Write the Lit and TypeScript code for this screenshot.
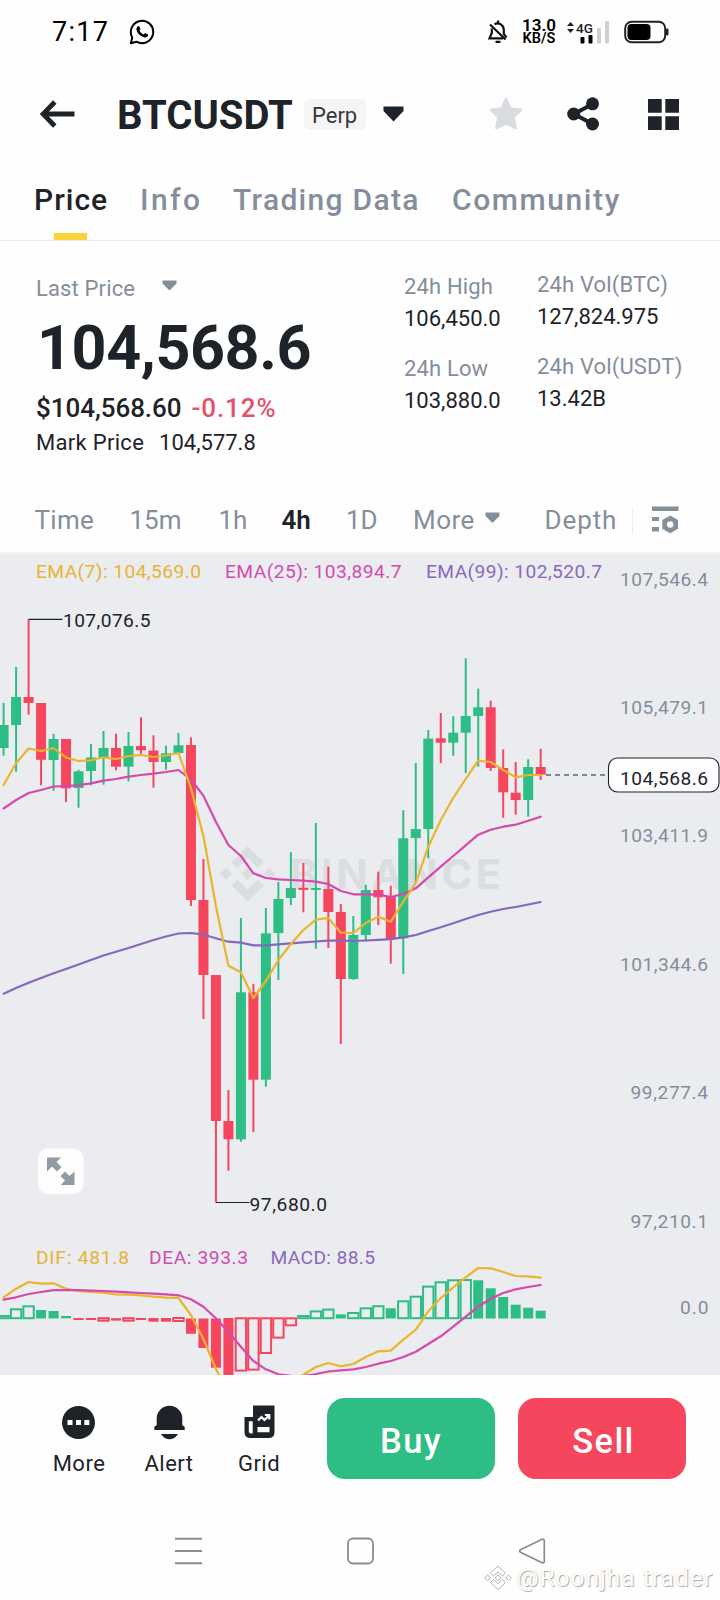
import { LitElement, html, svg, css } from "lit";
import { customElement } from "lit/decorators.js";

const GREEN = "#2ebd85";
const RED = "#f6465d";

const FIRST_X = 3.6;
const STEP = 12.49;
const cx = (i: number) => FIRST_X + STEP * i;

// [direction, high, body top, body bottom, low] in chart coordinates
type Candle = [number, number, number, number, number];
const CANDLES: Candle[] = [
  [1, 703, 725, 748, 755.7], [1, 667, 697, 725, 771.7], [0, 619.3, 697, 703, 714.7],
  [0, 703, 703, 759.8, 785.3], [1, 733.7, 739, 760, 790.7], [0, 739, 739, 788.3, 802],
  [1, 769.7, 771.3, 788, 807.7], [1, 744, 757.5, 771, 785.3], [1, 731, 748, 757.3, 784.7],
  [0, 733.7, 748, 766.7, 770.3], [1, 732, 746, 766.7, 781.3], [0, 717.3, 746, 750.3, 753.7],
  [0, 735.3, 750.5, 762, 787.7], [1, 745.7, 753.3, 762, 769.7], [1, 733, 745.3, 753, 753],
  [0, 737.3, 745, 900, 906], [0, 859, 900, 975, 1019], [0, 975, 975, 1121, 1202.5],
  [0, 1090, 1121, 1139.3, 1170.7], [1, 918, 992.3, 1139.3, 1141.7], [0, 984, 992.3, 1079.7, 1132],
  [1, 908, 933.3, 1079.7, 1086.7], [1, 882, 899, 933, 980], [1, 852.3, 888, 898, 905],
  [0, 863, 887.9, 889.9, 912.3], [1, 823, 888, 889.9, 948.7], [0, 866.7, 889, 912, 948],
  [0, 904, 912, 979, 1044], [1, 916, 935, 979, 979.7], [1, 884.7, 890, 935, 940],
  [0, 871.7, 890, 897.3, 925], [0, 885.7, 897, 939, 963.7], [1, 810.3, 838.3, 938.3, 974],
  [1, 763, 829, 838, 883], [1, 730, 738.7, 829, 858.3], [0, 713, 738.3, 742.7, 763],
  [1, 716.3, 732.7, 742.7, 755.7], [1, 658.3, 716, 732.7, 773], [1, 688.7, 707.3, 716, 766.7],
  [0, 700.7, 707.3, 768, 771], [0, 749.3, 768, 792.3, 817.7], [0, 762, 792.7, 800, 814.7],
  [1, 759.3, 767, 800, 816.7], [0, 748.7, 767, 774.7, 780],
];

const EMA7 = [785, 763, 748.5, 751, 748, 757.5, 761, 760.3, 757.3, 759, 756, 755, 757, 755.5, 753, 788, 836, 906,
  965.7, 972.3, 998, 981, 960, 944, 930, 919.7, 918, 932.7, 933, 923, 916.7, 921.7, 901.7, 883, 846.7, 820, 798,
  779, 760.7, 762, 770, 777.3, 775, 775];
const EMA25 = [808.5, 800, 793, 790, 786.5, 786.2, 785.2, 783.3, 780.7, 779, 776.7, 775, 773.7, 772, 770, 779.5,
  795.7, 821.7, 845, 856, 873.3, 878, 879.3, 880, 880.7, 881.7, 884, 891, 894.3, 894.3, 894.7, 897, 894, 888.3,
  877.3, 866.7, 856, 845.3, 834.7, 829.7, 826.7, 824.7, 820.7, 816.7];
const EMA99 = [993.7, 988, 982.7, 978, 973.3, 969, 964.5, 960, 955.5, 951.7, 948, 944, 940, 936.5, 933.5, 933,
  934.7, 938.3, 941.7, 942.7, 945.3, 945.3, 944.3, 943.3, 942.4, 941.5, 940.7, 940.7, 941, 940.5, 939.8, 939.2,
  937.3, 935, 931, 927.2, 923.3, 919, 915, 911.8, 909, 907, 904.5, 902];
const DIF = [1297.3, 1288.7, 1282, 1283.7, 1283.3, 1288.7, 1291, 1292, 1292.7, 1294.5, 1294.7, 1295.3, 1296.7,
  1297.7, 1298, 1315, 1339, 1369, 1392, 1396, 1398, 1395, 1390, 1382, 1374.7, 1367, 1363, 1366.3, 1364, 1357,
  1351.3, 1350.7, 1339.7, 1329.7, 1311.3, 1298, 1287.3, 1277.3, 1268, 1268.3, 1272, 1276, 1276.3, 1277.7];
const DEA = [1299.7, 1297.3, 1294, 1292, 1290.2, 1290, 1290.2, 1290.7, 1291, 1291.7, 1292.3, 1293, 1293.7, 1294.3,
  1295.3, 1299.3, 1306.7, 1318.3, 1332, 1346.7, 1361, 1369.3, 1374.3, 1375.8, 1376, 1374, 1371.5, 1370.3, 1369.3,
  1367, 1363.7, 1361, 1357, 1351.7, 1344, 1336.3, 1326.7, 1316.7, 1306.7, 1298.7, 1293, 1289.3, 1287, 1285];

// [direction, hollow, top, bottom]
type Bar = [number, number, number, number];
const BARS: Bar[] = [
  [1, 1, 1315, 1319.2], [1, 1, 1308.3, 1319.2], [1, 1, 1305.3, 1319.2], [1, 0, 1310, 1318.5],
  [1, 0, 1311, 1318.5], [1, 0, 1316, 1318.3], [0, 0, 1318, 1320], [0, 0, 1318, 1320],
  [0, 1, 1317.2, 1321.7], [0, 0, 1318.2, 1320.6], [0, 1, 1317.2, 1321.7], [0, 0, 1318, 1320],
  [0, 0, 1318, 1321.7], [0, 0, 1318, 1321.7], [0, 1, 1317, 1322], [0, 0, 1318.5, 1333.8],
  [0, 0, 1318.5, 1348], [0, 0, 1318.5, 1367.7], [0, 0, 1318, 1376], [0, 1, 1317.3, 1371.6],
  [0, 1, 1317.3, 1370.6], [0, 1, 1317.3, 1354], [0, 1, 1317.3, 1338.6], [0, 1, 1317.3, 1326.3],
  [1, 1, 1315, 1319.2], [1, 1, 1310.4, 1319.2], [1, 1, 1308.6, 1319.2], [1, 0, 1314.3, 1318.5],
  [1, 1, 1312, 1319.2], [1, 1, 1307.3, 1319.2], [1, 1, 1305.2, 1319.2], [1, 0, 1308.3, 1318.5],
  [1, 1, 1300.3, 1319.2], [1, 1, 1295.7, 1319.2], [1, 1, 1285.6, 1319.2], [1, 1, 1281.3, 1319.2],
  [1, 1, 1279.3, 1319.2], [1, 1, 1279, 1319.2], [1, 0, 1280.3, 1318.5], [1, 0, 1288.3, 1318.5],
  [1, 0, 1297, 1318.5], [1, 0, 1304.7, 1318.5], [1, 0, 1307.7, 1318.5], [1, 0, 1310.7, 1318.5],
];

const AXIS: [string, number][] = [
  ["107,546.4", 585.7], ["105,479.1", 714], ["103,411.9", 842.3],
  ["101,344.6", 970.8], ["99,277.4", 1099], ["97,210.1", 1227.6],
];

const points = (ys: number[]) => ys.map((y, i) => `${cx(i).toFixed(1)},${y}`).join(" ");

@customElement("price-chart")
export class PriceChart extends LitElement {
  static styles = css`
    :host { display: block; }
    svg { display: block; width: 720px; height: 823px; background: #eaecef; }
    text { font-family: Roboto, "Liberation Sans", sans-serif; font-size: 19.2px; }
    .line { fill: none; stroke-width: 2.2; stroke-linejoin: round; stroke-linecap: round; }
    .y { stroke: #ebb42c; }
    .p { stroke: #d549ac; }
    .v { stroke: #8667c0; }
    .ty { fill: #e7b335; }
    .tp { fill: #d34bae; }
    .tv { fill: #8a68c0; }
    .axis { fill: #848e9c; }
    .ink { fill: #1e2329; }
    .brand { font-family: Inter, Roboto, sans-serif; font-size: 41.5px; font-weight: 700; fill: #dadde1; }
    .mark { fill: #dadde1; }
  `;

  render() {
    return html`<svg viewBox="0 552 720 823">
      <rect x="0" y="552" width="720" height="1.5" fill="#f0f1f3"></rect>
      <g class="mark">
        <path d="M247.7 846 L264 862 L258 868 L247.7 858 L237.5 868 L231.5 862 Z"></path>
        <path d="M247.7 901.5 L264 885.500 L258 879.500 L247.7 889.500 L237.5 879.500 L231.5 885.500 Z"></path>
        <path d="M247.7 867.5 L254 873.700 L247.7 880 L241.500 873.700 Z"></path>
        <path d="M226 867.700 L232 873.700 L226 879.700 L220 873.700 Z"></path>
        <path d="M269.500 867.700 L275.500 873.700 L269.500 879.700 L263.500 873.700 Z"></path>
      </g>
      <text class="brand" x="290" y="888.500" textLength="211">BINANCE</text>

      ${BARS.map(([up, hollow, t, b], i) => {
        const c = up ? GREEN : RED;
        return hollow
          ? svg`<rect x=${cx(i) - 5.2} y=${t + 1} width="10.4" height=${b - t - 2} fill="none" stroke=${c} stroke-width="2"></rect>`
          : svg`<rect x=${cx(i) - 5} y=${t} width="10" height=${b - t} fill=${c}></rect>`;
      })}

      ${CANDLES.map(([up, h, t, b, l], i) => {
        const c = up ? GREEN : RED;
        return svg`<rect x=${cx(i) - 1} y=${h} width="2" height=${l - h} fill=${c}></rect>
          <rect x=${cx(i) - 5} y=${t} width="10" height=${b - t} fill=${c}></rect>`;
      })}

      <polyline class="line v" points=${points(EMA99)}></polyline>
      <polyline class="line p" points=${points(EMA25)}></polyline>
      <polyline class="line y" points=${points(EMA7)}></polyline>
      <polyline class="line y" points=${points(DIF)}></polyline>
      <polyline class="line p" points=${points(DEA)}></polyline>

      <path d="M28.600 619.300 H62.500 M216 1202.500 H249.500" stroke="#1e2329" stroke-width="1.2"></path>
      <text class="ink" x="63" y="626.700" textLength="87.500">107,076.5</text>
      <text class="ink" x="249.500" y="1210.700" textLength="77.500">97,680.0</text>

      <text class="ty" x="36" y="577.500" textLength="165">EMA(7): 104,569.0</text>
      <text class="tp" x="225" y="577.500" textLength="176.500">EMA(25): 103,894.7</text>
      <text class="tv" x="426" y="577.500" textLength="176">EMA(99): 102,520.7</text>
      <text class="ty" x="36" y="1263.500" textLength="93">DIF: 481.8</text>
      <text class="tp" x="149" y="1263.500" textLength="99">DEA: 393.3</text>
      <text class="tv" x="270.500" y="1263.500" textLength="104.500">MACD: 88.5</text>

      ${AXIS.map(([label, y]) => {
        const w = label.length > 8 ? 88 : 77.5;
        return svg`<text class="axis" x=${708 - w} y=${y} textLength=${w}>${label}</text>`;
      })}
      <text class="axis" x="680" y="1313.500" textLength="28.500">0.0</text>

      <path d="M546 775 H608" stroke="#5f6673" stroke-width="1.300" stroke-dasharray="5 4"></path>
      <rect x="608.500" y="758" width="110.500" height="34" rx="9" fill="#fdfdfd" stroke="#1e2329" stroke-width="1.100"></rect>
      <text class="ink" x="620" y="785" textLength="88">104,568.6</text>

      <rect x="38" y="1148.500" width="45.500" height="45.500" rx="10" fill="#fdfdfd"></rect>
      <path fill="#929aa5" d="M47 1157.500 H61 L56.500 1162 L61.500 1167 L57 1171.500 L52 1166.500 L47 1171.500 Z
        M74.500 1185 H60.500 L65 1180.500 L60.500 1176 L65 1171.500 L69.500 1176 L74.500 1171.500 Z"></path>
    </svg>`;
  }
}

@customElement("app-root")
export class AppRoot extends LitElement {
  static styles = css`
    :host {
      display: block;
      position: relative;
      width: 720px;
      height: 1600px;
      background: #fefefe;
      color: #1e2329;
      font-family: Roboto, "Liberation Sans", sans-serif;
      overflow: hidden;
      white-space: nowrap;
    }
    svg { display: block; flex: none; }

    .status { display: flex; align-items: center; height: 64px; padding: 0 51px 0 52px; color: #000; }
    .clock { font-size: 27px; letter-spacing: 1.3px; width: 77px; }
    .status-right { margin-left: auto; display: flex; align-items: center; }
    .rate { width: 34px; margin: 0 11px 0 14px; text-align: center; font-size: 14.5px; line-height: 14px; font-weight: 600; }
    .rate::first-line { font-size: 17px; }
    .net { font: 500 13.500px/14px Roboto, sans-serif; }
    .battery { margin-left: 14px; }

    .header { display: flex; align-items: center; height: 100px; padding: 0 41px 0 40px; }
    .back { margin-right: 42px; }
    .title { font-size: 40px; font-weight: 700; line-height: 44px; padding-top: 4px; width: 180px; }
    .perp { font-size: 22px; line-height: 28px; padding: 3px 8px 0; width: 46px; background: #f5f5f6; border-radius: 5px; margin: 0 17px 0 7px; color: #33383f; }
    .header-icons { margin-left: auto; display: flex; align-items: center; }
    .star { margin-right: 44px; }
    .share { margin-right: 48px; }

    .tabs {
      display: grid;
      grid-template-columns: 106px 93px 219px 1fr;
      height: 76px;
      padding-left: 34px;
      border-bottom: 1px solid #eaecef;
      color: #848e9c;
      font-size: 30px;
      font-weight: 500;
      line-height: 72px;
    }
    .tab { letter-spacing: 1.3px; }
    .info { letter-spacing: 2.4px; }
    .community { letter-spacing: 1.6px; }
    .active { color: #1e2329; letter-spacing: 1px; display: grid; grid-template-rows: 69px 7px; }
    .underline { width: 33px; height: 7px; margin-left: 19.500px; background: #f8d33a; }

    .stats { display: grid; grid-template-columns: 368px 133px 1fr; height: 247px; padding-left: 36px; font-size: 22px; }
    .last { padding-top: 32px; }
    .label { color: #848e9c; letter-spacing: 0.15px; }
    .row { display: flex; align-items: center; }
    .last-label { height: 30px; gap: 27px; color: #848e9c; letter-spacing: 0.15px; }
    .caret-up { margin-top: -5px; }
    .price { font-size: 61px; font-weight: 700; line-height: 90px; letter-spacing: -0.4px; padding-left: 1px; }
    .usd { font-size: 26px; font-weight: 500; line-height: 30px; gap: 10px; letter-spacing: -0.05px; }
    .change { color: #e2526a; letter-spacing: 0.9px; }
    .mark { line-height: 39px; gap: 15px; letter-spacing: 0.3px; }
    .mark-value { letter-spacing: 0; }
    .pair { line-height: 32px; padding-top: 30px; }
    .pair.early { padding-top: 28px; }
    .next { margin-top: 18px; }

    .frames {
      display: grid;
      grid-template-columns: 95px 89px 63px 64.500px 67px 131.500px 87.500px 20px 1fr;
      align-items: center;
      height: 64px;
      padding-left: 34.500px;
      font-size: 26px;
      color: #848e9c;
    }
    .frame-time { letter-spacing: 0.3px; }
    .frame-on { color: #1e2329; font-weight: 600; }
    .more { gap: 10px; letter-spacing: 0.5px; }
    .depth { letter-spacing: 0.9px; }
    .divider { width: 1px; height: 27px; background: #eaecef; }

    .bottom { display: flex; height: 125px; padding: 0 34px 0 34px; }
    .action { display: flex; flex-direction: column; align-items: center; width: 90px; padding-top: 30px; font-size: 22px; }
    .action-label { line-height: 28px; margin-top: 10px; letter-spacing: 0.5px; }
    .action svg { height: 35px; }
    .cta { width: 168px; height: 81px; margin-top: 23px; border-radius: 18px; color: #fff; font-size: 34.500px; font-weight: 500; line-height: 87px; text-align: center; letter-spacing: 1.4px; }
    .buy { background: #2ebd85; margin-left: 23px; }
    .sell { background: #f6465d; margin-left: 23px; text-indent: 3px; }

    .nav { display: flex; align-items: center; height: 101px; padding-left: 174px; }
    .nav svg + svg { margin-left: 143px; }

    .credit { position: absolute; right: 7px; bottom: 5px; display: flex; align-items: center; gap: 4px; color: #fff; font-size: 24.500px; line-height: 34px; letter-spacing: 1px; text-shadow: 1px 1px 1px #a8a8a8, -0.500px -0.500px 0.500px #dcdcdc; }
  `;

  render() {
    return html`
      <div class="status">
        <span class="clock">7:17</span>
        <svg width="26" height="26" viewBox="0 0 26 26" fill="none">
          <path d="M1.800 24.200 L3.300 18.500 A11.200 11.200 0 1 1 7.500 22.700 Z" stroke="#000" stroke-width="2" stroke-linejoin="round"></path>
          <path fill="#000" d="M8.800 7.200c.6-.5 1.200-.4 1.500.2l1 2.200c.2.500 0 1-.9 1.900 1 1.900 2.300 3.100 4.200 4 .9-1.100 1.400-1.500 1.900-1.300l2.200 1.100c.6.300.6.800.3 1.500-.7 1.400-2.400 2-4.200 1.500-3.700-1-6.500-3.900-7.300-7.200-.3-1.600.3-3 1.300-3.900Z"></path>
        </svg>
        <div class="status-right">
          <svg width="20" height="24" viewBox="0 0 20 24" fill="none" stroke="#111" stroke-width="2.200">
            <path d="M3.800 8.500 V13 L1.500 18.300 H15 M6.500 4.300 C11 1.800 15.800 5 15.800 10 V14 L18.500 17.500"></path>
            <path d="M2 4.500 L17.500 19.500 M10 0.500 V3 M7.500 21.800 H12.500"></path>
          </svg>
          <div class="rate">13.0<br>KB/S</div>
          <svg width="43" height="25" viewBox="0 0 43 25">
            <path d="M0 6 L3.500 2 L7 6 Z M0 9 L3.500 13 L7 9 Z" fill="#222"></path>
            <text class="net" x="9" y="13" textLength="17" fill="#222">4G</text>
            <rect x="13.500" y="17" width="4" height="6.500" rx="1" fill="#000"></rect>
            <rect x="21.500" y="15" width="4" height="8.500" rx="1" fill="#000"></rect>
            <rect x="30" y="8" width="4" height="15.500" rx="1" fill="#cfcfcf"></rect>
            <rect x="38" y="1" width="4" height="22.500" rx="1" fill="#cfcfcf"></rect>
          </svg>
          <svg class="battery" width="45" height="24" viewBox="0 0 45 24">
            <rect x="1.200" y="1.700" width="40" height="20.600" rx="6.500" fill="none" stroke="#222" stroke-width="2"></rect>
            <rect x="3.500" y="4" width="23" height="16" rx="4" fill="#000"></rect>
            <rect x="42" y="8.500" width="2.500" height="7" rx="1" fill="#222"></rect>
          </svg>
        </div>
      </div>

      <div class="header">
        <svg class="back" width="35" height="28" viewBox="0 0 35 28" fill="none" stroke="#1e2329" stroke-width="4.800">
          <path d="M3.500 14 H34.500 M14.800 2 L3 14 L14.800 26"></path>
        </svg>
        <div class="title">BTCUSDT</div>
        <div class="perp">Perp</div>
        <svg width="21" height="16" viewBox="0 0 21 16"><path d="M0.500 0.500 H20.500 V5 L10.500 15.500 L0.500 5 Z" fill="#1e2329"></path></svg>
        <div class="header-icons">
          <svg class="star" width="34" height="34" viewBox="0 0 34 34">
            <path d="M17 2 L21.300 11.600 L32 12.800 L24.500 20 L26.700 31 L17 26.500 L7.300 31 L9.500 20 L2 12.800 L12.700 11.600 Z" fill="#d9dce1" stroke="#d9dce1" stroke-width="2.500" stroke-linejoin="round"></path>
          </svg>
          <svg class="share" width="33" height="34" viewBox="0 0 33 34">
            <path d="M25.500 7 L7 17 L25.500 27" fill="none" stroke="#1e2329" stroke-width="4"></path>
            <circle cx="25.500" cy="6.800" r="6.500" fill="#1e2329"></circle>
            <circle cx="6.700" cy="17" r="6.500" fill="#1e2329"></circle>
            <circle cx="25.500" cy="27" r="6.500" fill="#1e2329"></circle>
          </svg>
          <svg width="31" height="31" viewBox="0 0 31 31" fill="#1e2329">
            <path d="M0 0h13.700v13.700H0Z M17.300 0H31v13.700H17.300Z M0 17.300h13.700V31H0Z M17.300 17.300H31V31H17.300Z"></path>
          </svg>
        </div>
      </div>

      <div class="tabs">
        <div class="active">Price<div class="underline"></div></div>
        <div class="tab info">Info</div>
        <div class="tab">Trading Data</div>
        <div class="tab community">Community</div>
      </div>

      <div class="stats">
        <div class="last">
          <div class="row last-label">
            <span>Last Price</span>
            <svg class="caret-up" width="15" height="11" viewBox="0 0 15 11"><path d="M0.500 0.500 H14.500 V3.500 L7.500 10.500 L0.500 3.500 Z" fill="#848e9c"></path></svg>
          </div>
          <div class="price">104,568.6</div>
          <div class="row usd"><span>$104,568.60</span><span class="change">-0.12%</span></div>
          <div class="row mark"><span>Mark Price</span><span class="mark-value">104,577.8</span></div>
        </div>
        <div class="pair">
          <div class="label">24h High</div><div>106,450.0</div>
          <div class="label next">24h Low</div><div>103,880.0</div>
        </div>
        <div class="pair early">
          <div class="label">24h Vol(BTC)</div><div>127,824.975</div>
          <div class="label next">24h Vol(USDT)</div><div>13.42B</div>
        </div>
      </div>

      <div class="frames">
        <span class="frame-time">Time</span><span>15m</span><span>1h</span><span class="frame-on">4h</span><span>1D</span>
        <span class="row more">More
          <svg class="caret-up" width="15" height="12" viewBox="0 0 15 12"><path d="M0.500 0.500 H14.500 V4 L7.500 11 L0.500 4 Z" fill="#848e9c"></path></svg>
        </span>
        <span class="depth">Depth</span>
        <span class="divider"></span>
        <svg width="28" height="28" viewBox="0 0 28 28" fill="#848e9c">
          <path d="M0 0.500H26.500V5H0Z M0 11H7V15H0Z M0 21H7V25.500H0Z"></path>
          <path fill-rule="evenodd" d="M18.200 9.500 L26 14 V22.800 L18.200 27.300 L10.300 22.800 V14 Z M18.200 15.300 A3.200 3.200 0 1 0 18.200 21.700 A3.200 3.200 0 1 0 18.200 15.300 Z"></path>
        </svg>
      </div>

      <price-chart></price-chart>

      <div class="bottom">
        <div class="action">
          <svg width="34" height="35" viewBox="0 0 34 35"><circle cx="16.500" cy="17.500" r="16.500" fill="#1e2329"></circle>
            <path d="M5.500 15h5v5h-5Z M14 15h5v5h-5Z M22.300 15h5v5h-5Z" fill="#fff"></path></svg>
          <span class="action-label">More</span>
        </div>
        <div class="action">
          <svg width="31" height="35" viewBox="0 0 31 35" fill="#1e2329">
            <path d="M2.700 13.500 A12.800 12.800 0 0 1 28.300 13.500 V20 L30.700 22 V25 H0.300 V22 L2.700 20 Z M7 29 H24 C22 32.500 18.500 34.300 15.500 34.300 S9 32.500 7 29 Z"></path></svg>
          <span class="action-label">Alert</span>
        </div>
        <div class="action">
          <svg width="31" height="35" viewBox="0 0 31 35">
            <path d="M9 0.500 H30.500 V27 Q30.500 33 24.500 33 H6.500 Q0.500 33 0.500 27 V12 H9 Z" fill="#1e2329"></path>
            <path d="M4.800 16.300 H8.700 V28.500 H6.800 Q4.800 28.500 4.800 26.500 Z M13.500 22 H25.500 V27.300 H13.500 Z" fill="#fff"></path>
            <path d="M14 15.500 L17.500 12 L20.500 15 L25 10.500 M20.800 10 H25.300 V14.500" fill="none" stroke="#fff" stroke-width="2.200"></path>
          </svg>
          <span class="action-label">Grid</span>
        </div>
        <div class="cta buy">Buy</div>
        <div class="cta sell">Sell</div>
      </div>

      <div class="nav">
        <svg width="29" height="28" viewBox="0 0 29 28"><path d="M1 1.700H28M1 14H28M1 26.300H28" stroke="#8c8c8c" stroke-width="2"></path></svg>
        <svg width="29" height="28" viewBox="0 0 29 28"><rect x="2" y="1.500" width="25" height="25" rx="5" fill="none" stroke="#8c8c8c" stroke-width="1.800"></rect></svg>
        <svg width="29" height="28" viewBox="0 0 29 28"><path d="M2.500 12.800 L24 2.200 Q26.300 1.500 26.300 4 V24 Q26.300 26.500 24 25.800 L2.500 15.200 Q0.800 14 2.500 12.800 Z" fill="none" stroke="#8c8c8c" stroke-width="1.700"></path></svg>
      </div>

      <div class="credit">
        <svg width="28" height="26" viewBox="0 0 28 26" fill="#fff" stroke="#a8a8a8" stroke-width="0.900">
          <path d="M14 1 L21.500 8 L18.500 11 L14 7 L9.500 11 L6.500 8 Z M14 24.500 L21.500 17.500 L18.500 14.500 L14 18.500 L9.500 14.500 L6.500 17.500 Z M14 10 L17 12.800 L14 15.600 L11 12.800 Z M3.500 10 L6.500 12.800 L3.500 15.600 L0.700 12.800 Z M24.500 10 L27.300 12.800 L24.500 15.600 L21.700 12.800 Z"></path>
        </svg>
        <span>@Roonjha trader</span>
      </div>
    `;
  }
}
